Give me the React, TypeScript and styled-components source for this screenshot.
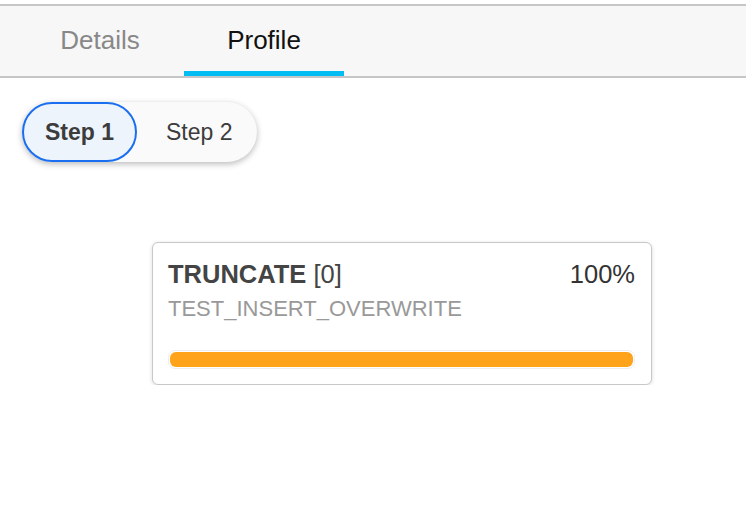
import React, { useState } from 'react';
import styled, { createGlobalStyle } from 'styled-components';

const GlobalStyle = createGlobalStyle`
  body {
    margin: 0;
    background: #ffffff;
    font-family: "Liberation Sans", Arial, sans-serif;
  }
`;

const Page = styled.div`
  padding-top: 4px;
`;

const TabBar = styled.div`
  display: flex;
  gap: 4px;
  padding-left: 20px;
  height: 70px;
  background: #f7f7f7;
  border-top: 2px solid #c6c6c6;
  border-bottom: 2px solid #c6c6c6;
`;

const Tab = styled.div<{ $active?: boolean }>`
  box-sizing: border-box;
  width: 160px;
  padding-top: 19px;
  font-size: 26px;
  line-height: 30px;
  text-align: center;
  color: ${(p) => (p.$active ? '#111111' : '#888888')};
  border-bottom: 5px solid ${(p) => (p.$active ? '#00bcf2' : 'transparent')};
  cursor: pointer;
`;

const Body = styled.div`
  padding: 24px 0 0 22px;
`;

const StepGroup = styled.div`
  display: inline-flex;
  height: 60px;
  border-radius: 30px;
  background: #fafafa;
  box-shadow: 0 2px 6px rgba(0, 0, 0, 0.28);
`;

const StepButton = styled.button<{ $active?: boolean }>`
  box-sizing: border-box;
  height: 60px;
  padding: 0 ${(p) => (p.$active ? '21px' : '22px')} 0 ${(p) => (p.$active ? '21px' : '27px')};
  border-radius: 30px;
  border: 2px solid ${(p) => (p.$active ? '#1a6ff0' : 'transparent')};
  background: ${(p) => (p.$active ? '#eef4fc' : 'transparent')};
  font-family: "Liberation Sans", Arial, sans-serif;
  font-size: 23px;
  font-weight: ${(p) => (p.$active ? 700 : 400)};
  color: #3c3c3c;
  cursor: pointer;
`;

const Canvas = styled.div`
  padding: 80px 0 0 152px;
`;

const Card = styled.div`
  box-sizing: border-box;
  width: 500px;
  padding: 16px 16px 15px 15px;
  background: #ffffff;
  border: 1px solid #c8c8c8;
  border-radius: 6px;
  box-shadow: 0 1px 4px rgba(0, 0, 0, 0.14);
`;

const TitleRow = styled.div`
  display: flex;
  justify-content: space-between;
  font-size: 25.5px;
  line-height: 30px;
  color: #333333;
`;

const Title = styled.span`
  color: #444444;
  b {
    font-weight: 700;
  }
`;

const Subtitle = styled.div`
  margin-top: 7px;
  font-size: 22px;
  line-height: 26px;
  color: #999999;
`;

const Track = styled.div`
  box-sizing: border-box;
  margin-top: 28px;
  height: 19px;
  padding: 1px;
  border: 1px solid #eeeeee;
  border-radius: 7px;
  background: #ffffff;
`;

const Fill = styled.div`
  height: 100%;
  border-radius: 6px;
  background: #ffa31a;
`;

const App: React.FC = () => {
  const [tab, setTab] = useState('Profile');
  const [step, setStep] = useState(1);
  const progress = 100;

  return (
    <Page>
      <GlobalStyle />
      <TabBar>
        {['Details', 'Profile'].map((t) => (
          <Tab key={t} $active={tab === t} onClick={() => setTab(t)}>
            {t}
          </Tab>
        ))}
      </TabBar>
      <Body>
        <StepGroup>
          <StepButton $active={step === 1} onClick={() => setStep(1)}>
            Step 1
          </StepButton>
          <StepButton $active={step === 2} onClick={() => setStep(2)}>
            Step 2
          </StepButton>
        </StepGroup>
      </Body>
      <Canvas>
        <Card>
          <TitleRow>
            <Title>
              <b>TRUNCATE</b> [0]
            </Title>
            <span>{progress}%</span>
          </TitleRow>
          <Subtitle>TEST_INSERT_OVERWRITE</Subtitle>
          <Track>
            <Fill style={{ width: `${progress}%` }} />
          </Track>
        </Card>
      </Canvas>
    </Page>
  );
};

export default App;
